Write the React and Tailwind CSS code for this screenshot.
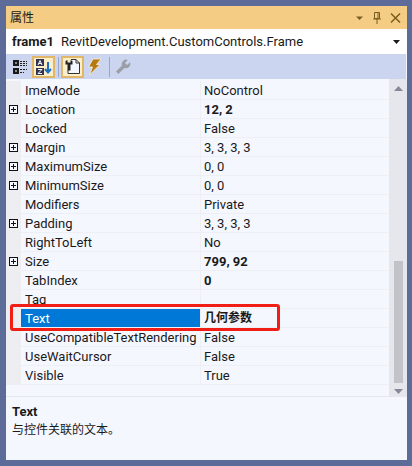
const rows = [
  ["ImeMode", "NoControl", false, false],
  ["Location", "12, 2", true, true],
  ["Locked", "False", false, false],
  ["Margin", "3, 3, 3, 3", true, false],
  ["MaximumSize", "0, 0", true, false],
  ["MinimumSize", "0, 0", true, false],
  ["Modifiers", "Private", false, false],
  ["Padding", "3, 3, 3, 3", true, false],
  ["RightToLeft", "No", false, false],
  ["Size", "799, 92", true, true],
  ["TabIndex", "0", false, true],
  ["Tag", "", false, false],
  ["Text", "几何参数", false, true, true],
  ["UseCompatibleTextRendering", "False", false, false],
  ["UseWaitCursor", "False", false, false],
  ["Visible", "True", false, false],
];

function PlusBox() {
  return (
    <svg width="9" height="9" viewBox="0 0 9 9" className="block">
      <rect x="0.5" y="0.5" width="8" height="8" fill="#f5f7ff" stroke="#111" />
      <path d="M2 4.5H7M4.5 2V7" stroke="#111" />
    </svg>
  );
}

function Row({ name, value, plus, bold, selected }) {
  return (
    <div className="flex h-[19px] shrink-0">
      <div className="flex w-[15px] shrink-0 items-center justify-end pr-[3px] bg-[#eeeef2]">{plus ? <PlusBox /> : null}</div>
      <div className={selected ? "flex w-[179px] shrink-0 items-center pl-[4px] bg-[#0078d7] text-white border-b border-[#eeeff5]" : "flex w-[179px] shrink-0 items-center pl-[4px] border-b border-[#eeeff5]"}>
        <span>{name}</span>
      </div>
      <div className="w-px shrink-0 bg-[#eeeff5]" />
      <div className={bold ? (selected ? "flex flex-1 items-center pl-[3px] text-[12px] font-bold border-b border-[#eeeff5]" : "flex flex-1 items-center pl-[3px] font-bold border-b border-[#eeeff5]") : "flex flex-1 items-center pl-[3px] border-b border-[#eeeff5]"}>
        {value}
      </div>
    </div>
  );
}

export default function App() {
  return (
    <div className="h-[466px] w-[412px] overflow-hidden bg-[#5d6b99] pt-[6px] pr-[5px] pb-[6px] pl-[6px] text-[13px] leading-none text-[#1a1a1a] font-['Roboto','Noto_Sans_CJK_SC',sans-serif]">
      <div className="relative flex h-[454px] flex-col bg-[#f5f7ff]">
        <div className="flex h-[23px] shrink-0 items-center bg-[#f5cc84] pl-[4px] pr-[5px]">
          <span className="text-[12px]">属性</span>
          <div className="ml-auto flex items-center gap-[5px]">
            <svg width="12" height="12" viewBox="0 0 12 12"><path d="M2 4.5H9L5.5 8Z" fill="#7a5c1e" /></svg>
            <svg width="12" height="14" viewBox="0 0 12 14"><path d="M3.5 1.5H8.5V7.5H3.5ZM7 2V7M2 8H10M6 8V13" fill="none" stroke="#7a5c1e" /></svg>
            <svg width="14" height="12" viewBox="0 0 14 12"><path d="M3 1.5L12 10.5M12 1.5L3 10.5" fill="none" stroke="#7a5c1e" strokeWidth="1.5" /></svg>
          </div>
        </div>
        <div className="flex h-[25px] shrink-0 items-center bg-white pl-[6px] pr-[7px]">
          <span className="font-bold">frame1</span>
          <span className="ml-[7px]">RevitDevelopment.CustomControls.Frame</span>
          <svg className="ml-auto" width="7" height="4" viewBox="0 0 7 4"><path d="M0 0H7L3.5 4Z" fill="#1b1b1b" /></svg>
        </div>
        <div className="flex h-[25px] shrink-0 items-center mr-px bg-[#ccd5f0] pl-[7px]">
          <svg width="14" height="14" viewBox="0 0 14 14" className="mr-[5px] shrink-0">
            <path d="M1 1H5V5H1ZM1 9H5V13H1Z" fill="#f5f7ff" stroke="#1a1a1a" strokeWidth="2" />
            <path d="M2 3H4M2 11H4" stroke="#1a1a1a" />
            <path d="M7 1.5H14M7 3.5H14M7 5.5H14M7 9.5H14M7 12.5H11" stroke="#1e1e1e" strokeDasharray="2 1" />
          </svg>
          <div className="flex h-[22px] w-[23px] shrink-0 items-center justify-center border-2 border-[#e0b768] bg-[#fbeecb]">
            <svg width="16" height="16" viewBox="0 0 16 16">
              <rect x="0" y="0" width="8" height="7" fill="#33334d" />
              <rect x="0" y="9" width="8" height="7" fill="#33334d" />
              <path d="M2 6L4 1.5L6 6M2.8 4.5H5.2" fill="none" stroke="#f5f7ff" />
              <path d="M2 10.5H6L2 14.5H6" fill="none" stroke="#f5f7ff" />
              <path d="M12 3V13M9 10L12 13.5L15 10" fill="none" stroke="#1c6fc2" strokeWidth="2" />
            </svg>
          </div>
          <div className="ml-[3px] mr-[2px] h-[20px] w-px shrink-0 bg-[#9aa5c9]" />
          <div className="flex h-[22px] w-[23px] shrink-0 items-center justify-center border-2 border-[#e0b768] bg-[#fbeecb]">
            <svg width="17" height="17" viewBox="0 0 17 17">
              <path d="M7 1.5H12L15.5 5V15.5H4V12" fill="#f5f7ff" stroke="#333" />
              <path d="M12 1.5V5H15.5" fill="none" stroke="#333" />
              <path d="M1.5 3V6.5H3.5V12.5H6.5V6.5H8.5V3L6.5 2V4.5H3.5V2Z" fill="#222" />
            </svg>
          </div>
          <svg width="15" height="18" viewBox="0 0 15 18" className="ml-[3px] shrink-0">
            <path d="M6 1H14L9.5 6.5H13L2.5 17L5.5 9H1.5Z" fill="#b6790f" stroke="#f7f3e2" strokeWidth="0.8" />
          </svg>
          <div className="ml-[7px] h-[20px] w-px shrink-0 bg-[#9aa5c9]" />
          <svg width="16" height="16" viewBox="0 0 16 16" className="ml-[5px] shrink-0">
            <path d="M15 3.2L12 6L10 4L12.8 1A4.4 4.4 0 0 0 7 6.6L1 12.6L3.4 15L9.4 9A4.4 4.4 0 0 0 15 3.2Z" fill="#9b9fa8" />
          </svg>
        </div>
        <div className="flex h-[318px] shrink-0 pt-[2px] border-b border-[#e6e7ee]">
          <div className="flex w-[383px] shrink-0 flex-col">
            {rows.map((r) => (
              <Row key={r[0]} name={r[0]} value={r[1]} plus={r[2]} bold={r[3]} selected={r[4]} />
            ))}
          </div>
          <div className="-mt-[2px] flex flex-1 flex-col items-center bg-[#e6e7ed]">
            <svg width="9" height="5" viewBox="0 0 9 5" className="mt-[7px] shrink-0"><path d="M4.5 0L9 5H0Z" fill="#868999" /></svg>
            <div className="mt-[170px] h-[122px] w-[9px] shrink-0 bg-[#c2c3c9]" />
            <svg width="9" height="5" viewBox="0 0 9 5" className="mt-[6px] shrink-0"><path d="M0 0H9L4.5 5Z" fill="#868999" /></svg>
          </div>
        </div>
        <div className="flex flex-1 flex-col pl-[6px] pt-[8px]">
          <span className="font-bold">Text</span>
          <span className="mt-[6px] text-[12px]">与控件关联的文本。</span>
        </div>
        <div className="absolute left-[4px] top-[298px] h-[27px] w-[270px] rounded-[3px] border-[3px] border-[#f01e14]" />
      </div>
    </div>
  );
}
